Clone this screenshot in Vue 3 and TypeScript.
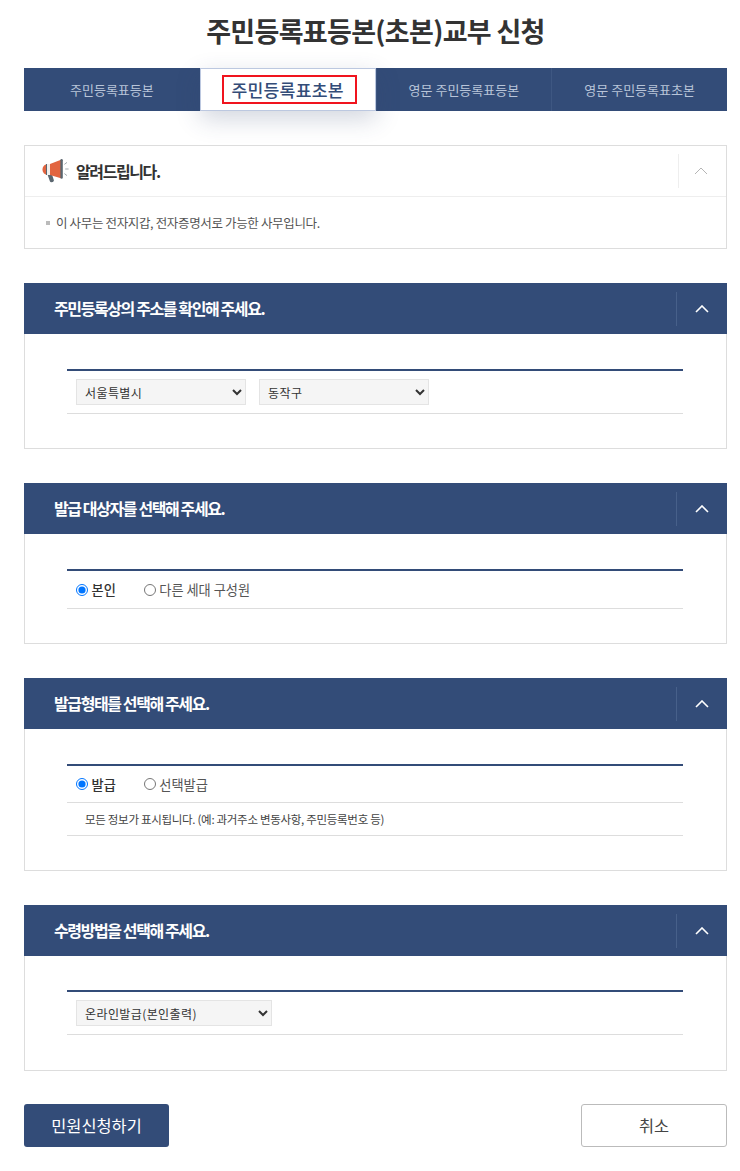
<script setup lang="ts">
const tabs = [
  { label: '주민등록표등본', active: false },
  { label: '주민등록표초본', active: true },
  { label: '영문 주민등록표등본', active: false },
  { label: '영문 주민등록표초본', active: false },
]
</script>

<template>
  <div class="page">
    <h1 class="title">주민등록표등본(초본)교부 신청</h1>

    <nav class="tabs">
      <a v-for="t in tabs" :key="t.label" class="tab" :class="{ active: t.active }">
        <span v-if="t.active" class="mark">{{ t.label }}</span>
        <template v-else>{{ t.label }}</template>
      </a>
    </nav>

    <section class="notice">
      <header class="notice-head">
        <svg class="horn" width="27" height="24" viewBox="0 0 27 24" aria-hidden="true">
          <path d="M5.5 15.5h4.5l1.8 5.6c.3.9-.2 1.6-1 1.8l-1.3.3c-.8.1-1.4-.3-1.6-1z" fill="#5b6770" />
          <path d="M6 5H8V16H6C2.8 16 .5 13.6 .5 10.5S2.8 5 6 5z" fill="#e2643f" />
          <rect x="4.6" y="5" width="3.4" height="11" fill="#f1efec" />
          <rect x="4" y="5" width="1" height="11" fill="#5b6770" />
          <path d="M8 5L19 .8V19.2L8 16z" fill="#e2643f" />
          <rect x="18.4" y="0" width="2.4" height="19.8" rx="1.2" fill="#5b6770" />
          <path d="M22.4 5.4l2.6-2M23.2 10h3.4M22.4 14.6l2.6 2" stroke="#a3abb0" stroke-width="1" fill="none" />
        </svg>
        <strong class="notice-title">알려드립니다.</strong>
        <span class="notice-toggle">
          <svg width="14" height="8" viewBox="0 0 14 8" aria-hidden="true"><path d="M1 7l6-6 6 6" fill="none" stroke="#b5b5b5" stroke-width="1" /></svg>
        </span>
      </header>
      <p class="notice-body"><i class="dot"></i>이 사무는 전자지갑, 전자증명서로 가능한 사무입니다.</p>
    </section>

    <section class="card">
      <header class="card-head">
        <h2>주민등록상의 주소를 확인해 주세요.</h2>
        <span class="toggle"><svg width="14" height="8" viewBox="0 0 14 8" aria-hidden="true"><path d="M1 7l6-6 6 6" fill="none" stroke="#fff" stroke-width="1.6" /></svg></span>
      </header>
      <div class="card-body">
        <div class="table">
          <div class="row row-select">
            <select class="sel"><option>서울특별시</option></select>
            <select class="sel"><option>동작구</option></select>
          </div>
        </div>
      </div>
    </section>

    <section class="card">
      <header class="card-head">
        <h2>발급 대상자를 선택해 주세요.</h2>
        <span class="toggle"><svg width="14" height="8" viewBox="0 0 14 8" aria-hidden="true"><path d="M1 7l6-6 6 6" fill="none" stroke="#fff" stroke-width="1.6" /></svg></span>
      </header>
      <div class="card-body">
        <div class="table">
          <div class="row row-radio">
            <label class="radio on"><input type="radio" name="target" checked />본인</label>
            <label class="radio"><input type="radio" name="target" />다른 세대 구성원</label>
          </div>
        </div>
      </div>
    </section>

    <section class="card">
      <header class="card-head">
        <h2>발급형태를 선택해 주세요.</h2>
        <span class="toggle"><svg width="14" height="8" viewBox="0 0 14 8" aria-hidden="true"><path d="M1 7l6-6 6 6" fill="none" stroke="#fff" stroke-width="1.6" /></svg></span>
      </header>
      <div class="card-body">
        <div class="table">
          <div class="row row-radio tight">
            <label class="radio on"><input type="radio" name="kind" checked />발급</label>
            <label class="radio"><input type="radio" name="kind" />선택발급</label>
          </div>
          <div class="row row-note">모든 정보가 표시됩니다. (예: 과거주소 변동사항, 주민등록번호 등)</div>
        </div>
      </div>
    </section>

    <section class="card last">
      <header class="card-head">
        <h2>수령방법을 선택해 주세요.</h2>
        <span class="toggle"><svg width="14" height="8" viewBox="0 0 14 8" aria-hidden="true"><path d="M1 7l6-6 6 6" fill="none" stroke="#fff" stroke-width="1.6" /></svg></span>
      </header>
      <div class="card-body">
        <div class="table">
          <div class="row row-select">
            <select class="sel wide"><option>온라인발급(본인출력)</option></select>
          </div>
        </div>
      </div>
    </section>

    <footer class="actions">
      <button class="btn primary" type="button">민원신청하기</button>
      <button class="btn ghost" type="button">취소</button>
    </footer>
  </div>
</template>

<style scoped>
.page {
  box-sizing: border-box;
  width: 740px;
  height: 1171px;
  overflow: hidden;
  padding: 0 13px 0 24px;
  font-family: "Noto Sans CJK KR", "Noto Sans", sans-serif;
  color: #333;
  background: #fff;
}
.title {
  margin: 0;
  height: 68px;
  line-height: 61px;
  font-size: 27px;
  font-weight: 700;
  letter-spacing: -0.68px;
  text-align: center;
  color: #333;
}
.tabs {
  display: grid;
  grid-template-columns: repeat(4, 1fr);
  height: 43px;
  background: #334c78;
}
.tab {
  display: flex;
  align-items: center;
  justify-content: center;
  box-sizing: border-box;
  font-size: 13px;
  color: #b9c5d9;
  border-left: 1px solid #3e5782;
}
.tab:first-child { border-left: 0; }
.tab.active {
  background: #fff;
  border: 1px solid #bcc8e0;
  color: #334c78;
  box-shadow: 0 8px 24px rgba(50, 70, 110, 0.22);
  position: relative;
}
.mark {
  box-sizing: border-box;
  width: 135px;
  height: 29px;
  margin-left: 3px;
  padding-right: 3px;
  line-height: 25px;
  border: 2px solid #f0141e;
  text-align: center;
  font-size: 17.2px;
  font-weight: 500;
  letter-spacing: 0.2px;
  white-space: nowrap;
}
.notice {
  box-sizing: border-box;
  height: 104px;
  margin-top: 34px;
  border: 1px solid #ddd;
}
.notice-head {
  display: flex;
  align-items: center;
  height: 50px;
  padding-left: 17px;
  border-bottom: 1px solid #eee;
}
.horn { flex: none; margin-right: 7px; }
.notice-title {
  flex: 1;
  font-size: 16px;
  font-weight: 700;
  letter-spacing: -1.4px;
  color: #333;
}
.notice-toggle {
  display: flex;
  align-items: center;
  justify-content: center;
  box-sizing: border-box;
  width: 48px;
  height: 34px;
  padding-right: 4px;
  border-left: 1px solid #eee;
}
.notice-body {
  margin: 0;
  padding: 17px 0 0 21px;
  font-size: 12.5px;
  line-height: 18px;
  letter-spacing: -0.35px;
  color: #555;
}
.dot {
  display: inline-block;
  width: 4px;
  height: 4px;
  margin-right: 6px;
  background: #bbb;
  vertical-align: 3px;
}
.card {
  margin-top: 34px;
  border: 1px solid #ddd;
  border-top: 0;
}
.card-head {
  display: flex;
  align-items: center;
  height: 51px;
  margin: 0 -1px;
  padding-left: 30px;
  background: #334c78;
  color: #fff;
}
.card-head h2 {
  flex: 1;
  margin: -2px 0 0;
  font-size: 16px;
  font-weight: 700;
  letter-spacing: -1.4px;
}
.toggle {
  display: flex;
  align-items: center;
  justify-content: center;
  box-sizing: border-box;
  width: 51px;
  height: 34px;
  border-left: 1px solid #47608a;
}
.card-body {
  padding: 35px 43px 34px 42px;
}
.card.last .card-body {
  padding-top: 34px;
  padding-bottom: 35px;
}
.table {
  border-top: 2px solid #334c78;
}
.row {
  box-sizing: border-box;
  display: flex;
  align-items: center;
  padding-left: 9px;
  border-bottom: 1px solid #ddd;
  font-size: 13px;
}
.row-select {
  gap: 13px;
  height: 43px;
  padding-bottom: 1px;
}
.row-radio {
  gap: 28px;
  height: 38px;
}
.row-radio.tight { height: 37px; }
.row-note {
  height: 33px;
  padding-left: 18px;
  font-size: 11.5px;
  letter-spacing: -0.3px;
  color: #444;
}
.sel {
  box-sizing: border-box;
  width: 170px;
  height: 26px;
  padding: 1px 4px 0;
  border: 1px solid #e4e4e4;
  border-radius: 0;
  background-color: #f5f5f5;
  font-family: inherit;
  font-size: 12px;
  letter-spacing: 0.4px;
  color: #333;
}
.sel.wide { width: 196px; }
.radio {
  display: flex;
  align-items: center;
  font-size: 13.2px;
  color: #555;
}
.radio.on { color: #333; font-weight: 500; }
.radio input {
  width: 12px;
  height: 12px;
  margin: 0 3.5px 0 0;
}
.actions {
  display: flex;
  justify-content: space-between;
  margin-top: 33px;
}
.btn {
  box-sizing: border-box;
  height: 43px;
  padding-bottom: 2px;
  font-family: inherit;
  font-size: 16.4px;
  border-radius: 3px;
}
.primary {
  width: 145px;
  border: 0;
  background: #334c78;
  color: #fff;
}
.ghost {
  width: 146px;
  border: 1px solid #bbb;
  background: #fff;
  color: #444;
}
</style>
